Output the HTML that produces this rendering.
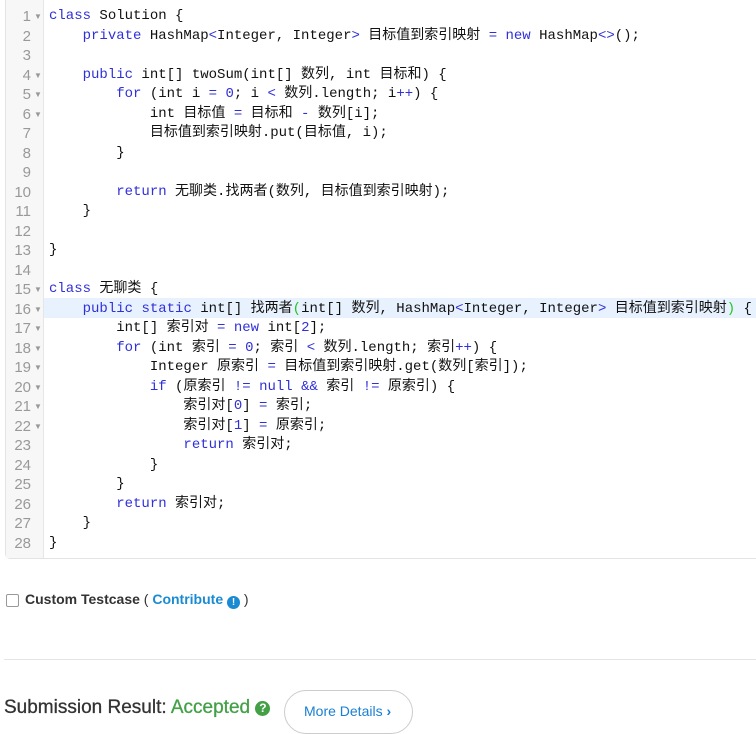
<!DOCTYPE html>
<html><head><meta charset="utf-8"><style>
body{margin:0;width:756px;height:721px;background:#fff;overflow:hidden;position:relative;font-family:"Liberation Sans","Noto Sans CJK SC",sans-serif}
.ed{position:absolute;left:5px;top:0;width:760px;height:558px;border:1px solid #e3e3e3;border-top:none;border-radius:0 0 0 5px;background:#fff}
.gut{position:absolute;left:0;top:0;width:37px;height:558px;background:#f7f7f7;border-right:1px solid #e6e6e6}
.hl{position:absolute;left:38px;top:298px;width:730px;height:20px;background:#e8f2ff}
.l{position:absolute;left:0;height:19.5px;line-height:19.5px;font-family:"Liberation Mono","Noto Sans CJK SC",monospace;font-size:14px;white-space:pre;color:#111}
.n{position:absolute;left:0;width:26px;text-align:right;color:#999;font-family:"Liberation Sans",sans-serif;font-size:15px;height:19.5px;line-height:19.5px}
.a{position:absolute;left:29px;font-size:8px;color:#999;height:19.5px;line-height:20px}
.k{color:#3030d8}.g{color:#1ec81e}
</style></head><body>
<div class="ed"><div class="gut"></div><div class="hl"></div></div>
<div id="c" style="position:absolute;left:5px;top:7px;width:751px"></div>
<script>
var L=[
['<k>class</k> Solution {',1],
['    <k>private</k> HashMap<k>&lt;</k>Integer, Integer<k>&gt;</k> 目标值到索引映射 <k>=</k> <k>new</k> HashMap<k>&lt;&gt;</k>();',0],
['',0],
['    <k>public</k> int[] twoSum(int[] 数列, int 目标和) {',1],
['        <k>for</k> (int i <k>=</k> <k>0</k>; i <k>&lt;</k> 数列.length; i<k>++</k>) {',1],
['            int 目标值 <k>=</k> 目标和 <k>-</k> 数列[i];',1],
['            目标值到索引映射.put(目标值, i);',0],
['        }',0],
['',0],
['        <k>return</k> 无聊类.找两者(数列, 目标值到索引映射);',0],
['    }',0],
['',0],
['}',0],
['',0],
['<k>class</k> 无聊类 {',1],
['    <k>public</k> <k>static</k> int[] 找两者<g>(</g>int[] 数列, HashMap<k>&lt;</k>Integer, Integer<k>&gt;</k> 目标值到索引映射<g>)</g> {',1],
['        int[] 索引对 <k>=</k> <k>new</k> int[<k>2</k>];',1],
['        <k>for</k> (int 索引 <k>=</k> <k>0</k>; 索引 <k>&lt;</k> 数列.length; 索引<k>++</k>) {',1],
['            Integer 原索引 <k>=</k> 目标值到索引映射.get(数列[索引]);',1],
['            <k>if</k> (原索引 <k>!=</k> <k>null</k> <k>&amp;&amp;</k> 索引 <k>!=</k> 原索引) {',1],
['                索引对[<k>0</k>] <k>=</k> 索引;',1],
['                索引对[<k>1</k>] <k>=</k> 原索引;',1],
['                <k>return</k> 索引对;',0],
['            }',0],
['        }',0],
['        <k>return</k> 索引对;',0],
['    }',0],
['}',0]];
var h='';
L.forEach(function(x,i){var t=i*19.5;var s=x[0].replace(/<k>/g,'<span class="k">').replace(/<g>/g,'<span class="g">').replace(/<\/[kg]>/g,'</span>');
h+='<div class="n" style="top:'+t+'px">'+(i+1)+'</div>';
if(x[1])h+='<div class="a" style="top:'+t+'px">▼</div>';
h+='<div class="l" style="top:'+t+'px;left:44px">'+s+'</div>';});
document.getElementById('c').innerHTML=h;
</script>
<div style="position:absolute;left:6px;top:594px;width:11px;height:11px;border:1px solid #999;border-radius:2px"></div>
<div style="position:absolute;left:25px;top:591px;font-size:14px;font-weight:bold;color:#333">Custom Testcase <span style="font-weight:normal">(</span> <span style="color:#1a8bd2">Contribute</span> <span style="display:inline-block;width:13px;height:13px;border-radius:50%;background:#1a8bd2;color:#fff;font-size:10px;line-height:13px;text-align:center;vertical-align:-1px">!</span> <span style="font-weight:normal">)</span></div>
<div style="position:absolute;left:4px;top:659px;width:752px;height:1px;background:#e5e5e5"></div>
<div style="position:absolute;left:4px;top:697px;font-size:19px;color:#333;-webkit-text-stroke:0.3px #333">Submission Result: <span style="color:#43a047;-webkit-text-stroke:0.3px #43a047">Accepted</span> <span style="display:inline-block;width:15px;height:15px;border-radius:50%;background:#43a047;color:#fff;font-size:12px;line-height:15px;text-align:center;font-weight:bold;vertical-align:1px;-webkit-text-stroke:0">?</span></div>
<div style="position:absolute;left:284px;top:690px;width:129px;height:44px;border:1px solid #ccc;border-radius:22px;box-sizing:border-box;color:#1a7fd2;font-size:14px;line-height:40px;padding-left:19px">More Details <b>›</b></div>
</body></html>
